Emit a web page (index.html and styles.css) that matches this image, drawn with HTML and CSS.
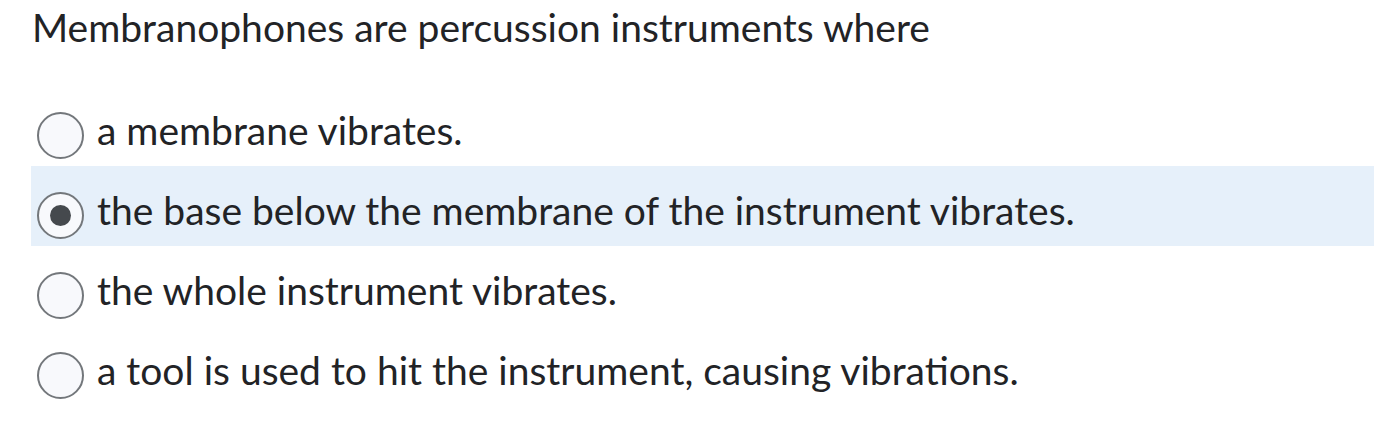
FILE: index.html
```html
<!DOCTYPE html>
<html>
<head>
<meta charset="utf-8">
<link rel="stylesheet" href="styles.css">
</head>
<body>
<div class="question">
  <div class="prompt">Membranophones are percussion instruments where</div>
  <div class="answers">
    <label class="answer"><span class="radio"></span><span class="text">a membrane vibrates.</span></label>
    <label class="answer selected"><span class="radio checked"></span><span class="text">the base below the membrane of the instrument vibrates.</span></label>
    <label class="answer"><span class="radio"></span><span class="text">the whole instrument vibrates.</span></label>
    <label class="answer"><span class="radio"></span><span class="text">a tool is used to hit the instrument, causing vibrations.</span></label>
  </div>
</div>
</body>
</html>
```
FILE: styles.css
```css
html, body {
  margin: 0;
  padding: 0;
  background: #ffffff;
}
body {
  font-family: Lato, "Liberation Sans", sans-serif;
  color: #222326;
}
.question {
  padding: 0 0 0 31px;
}
.prompt {
  font-size: 39px;
  line-height: 54px;
  padding-left: 1px;
  height: 86px;
}
.answers {
  display: flex;
  flex-direction: column;
}
.answer {
  box-sizing: border-box;
  display: flex;
  align-items: flex-start;
  height: 80px;
  padding: 21px 0 0 6px;
  gap: 13px;
  font-size: 39px;
}
.answer.selected {
  background: #e6f0fa;
}
.radio {
  box-sizing: border-box;
  width: 47px;
  height: 47px;
  margin-top: 5px;
  border-radius: 50%;
  border: 2px solid #73777b;
  background: #f8f9fc;
  display: flex;
  align-items: center;
  justify-content: center;
  flex: none;
}
.radio.checked::after {
  content: "";
  width: 21px;
  height: 21px;
  border-radius: 50%;
  background: #45494d;
}
.text {
  line-height: 47px;
}
```
